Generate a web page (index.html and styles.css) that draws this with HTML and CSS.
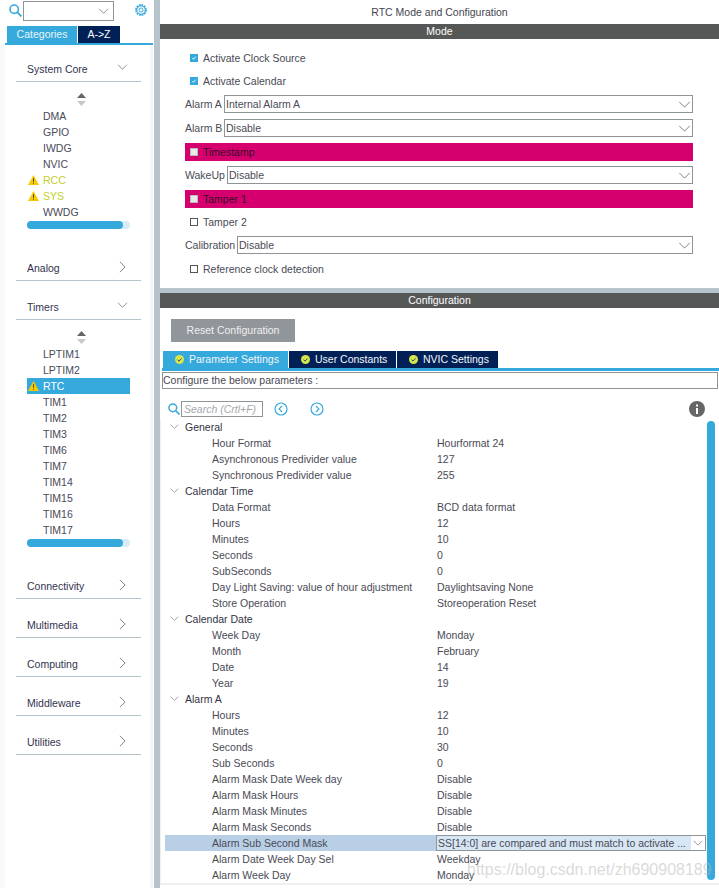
FILE: index.html
```html
<!DOCTYPE html>
<html lang="en">
<head>
<meta charset="utf-8">
<title>RTC Mode and Configuration</title>
<link rel="stylesheet" href="styles.css">
</head>
<body>
<svg class="defs" width="0" height="0" aria-hidden="true">
  <symbol id="down" viewBox="0 0 14 8"><path d="M1 1l6 6 6-6" fill="none" stroke="#6e7072" stroke-width="1"/></symbol>
  <symbol id="right" viewBox="0 0 8 14"><path d="M1 1l6 6-6 6" fill="none" stroke="#6e7072" stroke-width="1"/></symbol>
  <symbol id="warn" viewBox="0 0 11 10"><path d="M5.5 0L11 10H0z" fill="#f7c900"/><path d="M5.5 3.2v3.6M5.5 7.8v1" stroke="#5a4a00" stroke-width="1"/></symbol>
  <symbol id="sort" viewBox="0 0 9 13"><path d="M4.5 0L9 5H0z" fill="#62666a"/><path d="M4.5 13L9 8H0z" fill="#c6c9cc"/></symbol>
  <symbol id="search" viewBox="0 0 13 13"><circle cx="5.2" cy="5.2" r="4.2" fill="none" stroke="#36a9dc" stroke-width="1.6"/><path d="M8.4 8.4l4 4" stroke="#36a9dc" stroke-width="1.8"/></symbol>
  <symbol id="ok" viewBox="0 0 9 9"><circle cx="4.5" cy="4.5" r="4.5" fill="#d9e34a"/><path d="M2.5 4.6l1.500 1.500 2.600-2.700" fill="none" stroke="#1b5a7a" stroke-width="1"/></symbol>
</svg>
<div class="app">
  <aside class="side">
    <div class="top">
      <svg class="top-search"><use href="#search"/></svg>
      <div class="combo"><svg class="combo-arrow"><use href="#down"/></svg></div>
      <svg class="gear" viewBox="0 0 14 14">
        <circle cx="7" cy="7" r="5" fill="none" stroke="#36a9dc" stroke-width="1.800" stroke-dasharray="1.800 0.800"/>
        <circle cx="7" cy="7" r="4.200" fill="none" stroke="#36a9dc" stroke-width="1"/>
        <circle cx="7" cy="7" r="2" fill="none" stroke="#36a9dc" stroke-width="1"/>
      </svg>
    </div>
    <div class="side-tabs">
      <div class="side-tab on">Categories</div>
      <div class="side-tab">A-&gt;Z</div>
    </div>
    <div class="panel">
      <div class="cat"><span>System Core</span><svg class="cat-down"><use href="#down"/></svg></div>
      <div class="sort-row"><svg class="sort"><use href="#sort"/></svg></div>
      <ul class="list">
        <li>DMA</li><li>GPIO</li><li>IWDG</li><li>NVIC</li>
        <li class="warned"><svg class="warn"><use href="#warn"/></svg>RCC</li>
        <li class="warned"><svg class="warn"><use href="#warn"/></svg>SYS</li>
        <li>WWDG</li>
      </ul>
      <div class="hbar"><div class="hbar-fill"></div></div>

      <div class="cat gap"><span>Analog</span><svg class="cat-right"><use href="#right"/></svg></div>
      <div class="cat"><span>Timers</span><svg class="cat-down"><use href="#down"/></svg></div>
      <div class="sort-row"><svg class="sort"><use href="#sort"/></svg></div>
      <ul class="list">
        <li>LPTIM1</li><li>LPTIM2</li>
        <li class="sel"><svg class="warn"><use href="#warn"/></svg>RTC</li>
        <li>TIM1</li><li>TIM2</li><li>TIM3</li><li>TIM6</li><li>TIM7</li><li>TIM14</li><li>TIM15</li><li>TIM16</li><li>TIM17</li>
      </ul>
      <div class="hbar"><div class="hbar-fill"></div></div>

      <div class="cat gap"><span>Connectivity</span><svg class="cat-right"><use href="#right"/></svg></div>
      <div class="cat"><span>Multimedia</span><svg class="cat-right"><use href="#right"/></svg></div>
      <div class="cat"><span>Computing</span><svg class="cat-right"><use href="#right"/></svg></div>
      <div class="cat"><span>Middleware</span><svg class="cat-right"><use href="#right"/></svg></div>
      <div class="cat"><span>Utilities</span><svg class="cat-right"><use href="#right"/></svg></div>
    </div>
  </aside>

  <main class="main">
    <section class="mode">
      <div class="title">RTC Mode and Configuration</div>
      <div class="bar">Mode</div>
      <div class="form">
        <div class="row check"><span class="box on"><svg viewBox="0 0 9 9"><path d="M2.500 4.500l1.500 1.500 2.500-3" fill="none" stroke="#fff" stroke-width="1"/></svg></span>Activate Clock Source</div>
        <div class="row check"><span class="box on"><svg viewBox="0 0 9 9"><path d="M2.500 4.500l1.500 1.500 2.500-3" fill="none" stroke="#fff" stroke-width="1"/></svg></span>Activate Calendar</div>
        <div class="row"><label class="lab-alarm">Alarm A</label><div class="select">Internal Alarm A<svg class="sel-arrow"><use href="#down"/></svg></div></div>
        <div class="row plus"><label class="lab-alarm">Alarm B</label><div class="select">Disable<svg class="sel-arrow"><use href="#down"/></svg></div></div>
        <div class="row check pink plus"><span class="box"></span>Timestamp</div>
        <div class="row"><label class="lab-wake">WakeUp</label><div class="select">Disable<svg class="sel-arrow"><use href="#down"/></svg></div></div>
        <div class="row check pink plus"><span class="box"></span>Tamper 1</div>
        <div class="row check"><span class="box"></span>Tamper 2</div>
        <div class="row"><label class="lab-calib">Calibration</label><div class="select">Disable<svg class="sel-arrow"><use href="#down"/></svg></div></div>
        <div class="row check plus"><span class="box"></span>Reference clock detection</div>
      </div>
    </section>

    <section class="config">
      <div class="bar">Configuration</div>
      <div class="reset">Reset Configuration</div>
      <div class="tabs">
        <div class="tab on"><svg class="ok"><use href="#ok"/></svg>Parameter Settings</div>
        <div class="tab w2"><svg class="ok"><use href="#ok"/></svg>User Constants</div>
        <div class="tab w3"><svg class="ok"><use href="#ok"/></svg>NVIC Settings</div>
      </div>
      <div class="desc">Configure the below parameters :</div>
      <div class="tools">
        <svg class="tool-search"><use href="#search"/></svg>
        <div class="find">Search (Crtl+F)</div>
        <svg class="nav prev" viewBox="0 0 14 14"><circle cx="7" cy="7" r="6" fill="none" stroke="#36a9dc" stroke-width="1.200"/><path d="M8 4L5 7l3 3" fill="none" stroke="#36a9dc" stroke-width="1.100"/></svg>
        <svg class="nav next" viewBox="0 0 14 14"><circle cx="7" cy="7" r="6" fill="none" stroke="#36a9dc" stroke-width="1.200"/><path d="M6 4l3 3-3 3" fill="none" stroke="#36a9dc" stroke-width="1.100"/></svg>
        <svg class="info" viewBox="0 0 16 16"><circle cx="8" cy="8" r="8" fill="#666"/><rect x="7" y="7" width="2" height="6" fill="#fff"/><rect x="7" y="3.500" width="2" height="2" fill="#fff"/></svg>
      </div>
      <div class="tree">
        <div class="group"><svg class="tw"><use href="#down"/></svg>General</div>
        <div class="item"><span>Hour Format</span><span>Hourformat 24</span></div>
        <div class="item"><span>Asynchronous Predivider value</span><span>127</span></div>
        <div class="item"><span>Synchronous Predivider value</span><span>255</span></div>
        <div class="group"><svg class="tw"><use href="#down"/></svg>Calendar Time</div>
        <div class="item"><span>Data Format</span><span>BCD data format</span></div>
        <div class="item"><span>Hours</span><span>12</span></div>
        <div class="item"><span>Minutes</span><span>10</span></div>
        <div class="item"><span>Seconds</span><span>0</span></div>
        <div class="item"><span>SubSeconds</span><span>0</span></div>
        <div class="item"><span>Day Light Saving: value of hour adjustment</span><span>Daylightsaving None</span></div>
        <div class="item"><span>Store Operation</span><span>Storeoperation Reset</span></div>
        <div class="group"><svg class="tw"><use href="#down"/></svg>Calendar Date</div>
        <div class="item"><span>Week Day</span><span>Monday</span></div>
        <div class="item"><span>Month</span><span>February</span></div>
        <div class="item"><span>Date</span><span>14</span></div>
        <div class="item"><span>Year</span><span>19</span></div>
        <div class="group"><svg class="tw"><use href="#down"/></svg>Alarm A</div>
        <div class="item"><span>Hours</span><span>12</span></div>
        <div class="item"><span>Minutes</span><span>10</span></div>
        <div class="item"><span>Seconds</span><span>30</span></div>
        <div class="item"><span>Sub Seconds</span><span>0</span></div>
        <div class="item"><span>Alarm Mask Date Week day</span><span>Disable</span></div>
        <div class="item"><span>Alarm Mask Hours</span><span>Disable</span></div>
        <div class="item"><span>Alarm Mask Minutes</span><span>Disable</span></div>
        <div class="item"><span>Alarm Mask Seconds</span><span>Disable</span></div>
        <div class="item picked"><span>Alarm Sub Second Mask</span><div class="mask">SS[14:0] are compared and must match to activate ...<svg class="mask-arrow"><use href="#down"/></svg></div></div>
        <div class="item"><span>Alarm Date Week Day Sel</span><span>Weekday</span></div>
        <div class="item"><span>Alarm Week Day</span><span>Monday</span></div>
        <div class="vbar"></div>
      </div>
      <div class="mark">https://blog.csdn.net/zh690908189</div>
    </section>
  </main>
</div>
</body>
</html>
```
FILE: styles.css
```css
* { box-sizing: border-box; }
html, body { margin: 0; padding: 0; }
body {
  width: 719px;
  height: 888px;
  overflow: hidden;
  background: #fff;
  font: 10.5px/16px "Liberation Sans", Arial, sans-serif;
  color: #4a4a55;
}
.defs { position: absolute; }
ul { list-style: none; margin: 0; padding: 0; }

.app { display: grid; grid-template-columns: 154px 1fr; height: 888px; background: #b8c4cc; column-gap: 6px; }

/* sidebar */
.side { background: #fff; display: flex; flex-direction: column; height: 888px; overflow: hidden; }
.top { height: 26px; display: flex; align-items: flex-start; padding: 1px 0 0 9px; }
.top-search { width: 13px; height: 13px; margin: 3px 1px 0 0; }
.combo { width: 91px; height: 20px; border: 1px solid #8f9497; display: flex; align-items: center; justify-content: flex-end; padding-right: 4px; }
.combo-arrow { width: 11px; height: 6px; }
.gear { width: 14px; height: 14px; margin: 2px 0 0 20px; }
.side-tabs { display: flex; gap: 1px; height: 17px; padding-left: 7px; }
.side-tab { width: 42px; background: #012056; color: #fff; text-align: center; line-height: 17px; }
.side-tab.on { width: 70px; background: #36a9dc; color: #e8f4fa; }
.panel { flex: 1; margin: 0 1px 0 5px; border-top: 2px solid #36a9dc; background: #fff; box-shadow: inset -3px 0 0 #f4f5f6, -5px 0 0 #f8f9f9; }
.cat { height: 39px; margin: 0 12px 0 11px; border-bottom: 1px solid #b8c4cc; display: flex; justify-content: space-between; align-items: flex-end; padding: 0 0 4px 11px; color: #33334f; }
.cat.gap { margin-top: 13px; }
.cat-down { width: 11px; height: 6px; margin: 0 13px 7px 0; }
.cat-right { width: 7px; height: 12px; margin: 0 15px 3px 0; }
.panel > .cat:first-child { height: 37px; }
.sort-row { height: 26px; padding: 11px 0 0 72px; }
.sort { width: 9px; height: 13px; display: block; }
.list li { height: 16px; margin: 0 23px 0 22px; padding-left: 16px; line-height: 16px; position: relative; color: #4a4a5a; }
.list .warned { color: #c3cf2a; }
.list .sel { background: #36a9dc; color: #fff; }
.warn { position: absolute; left: 1px; top: 3px; width: 11px; height: 10px; }
.hbar { height: 8px; margin: 1px 23px 0 22px; border-radius: 4px; background: #d7ecf7; }
.hbar-fill { width: 96px; height: 8px; border-radius: 4px; background: #36a9dc; }

/* main */
.main { display: flex; flex-direction: column; gap: 5px; height: 888px; }
.mode { background: #fff; height: 288px; }
.title { height: 24px; line-height: 24px; text-align: center; color: #45454f; }
.bar { height: 15px; line-height: 15px; background: #565857; color: #fff; text-align: center; }
.form { display: flex; flex-direction: column; gap: 5px; padding: 10px 26px 0 25px; }
.row { height: 18px; display: flex; align-items: center; }
.row.plus { margin-top: 1px; }
.lab-alarm { width: 39px; flex: none; }
.lab-wake { width: 42px; flex: none; }
.lab-calib { width: 52px; flex: none; }
.check { padding-left: 5px; }
.pink { background: #d5006e; color: #3a0a2a; }
.box { width: 8px; height: 8px; margin-right: 5px; border: 1px solid #55565a; background: #fff; flex: none; display: block; }
.box svg { display: block; width: 8px; height: 8px; margin: -1px; }
.pink .box { background: #e9e9e9; border-color: #bbb; }
.box.on { background: #36a9dc; border-color: #36a9dc; }
.select { flex: 1; height: 18px; line-height: 16px; border: 1px solid #8f9497; padding-left: 1px; display: flex; justify-content: space-between; align-items: center; background: #fff; }
.sel-arrow { width: 13px; height: 7px; margin-right: 1px; }

.config { flex: 1; position: relative; background: #fff; overflow: hidden; }
.reset { width: 124px; height: 23px; margin: 11px 0 0 11px; background: #91969b; color: #f0f0f0; text-align: center; line-height: 23px; }
.tabs { display: flex; gap: 1px; height: 17px; margin: 9px 0 0 3px; }
.tab { width: 107px; background: #012056; color: #f2f6fa; line-height: 17px; display: flex; align-items: center; padding-left: 12px; }
.tab.on { width: 125px; background: #36a9dc; }
.tab.w3 { width: 101px; }
.ok { width: 9px; height: 9px; margin-right: 5px; }
.desc { height: 17px; margin: 4px 1px 0 2px; border: 1px solid #8f9497; line-height: 15px; position: relative; }
.desc::before { content: ""; position: absolute; left: -1px; right: -2px; top: -5px; height: 3px; background: #36a9dc; }
.tools { height: 16px; margin-top: 12px; display: flex; align-items: center; padding-left: 8px; }
.tool-search { width: 12px; height: 12px; }
.find { width: 82px; height: 16px; margin-left: 1px; border: 1px solid #8f9497; font-style: italic; color: #a4a8ac; line-height: 14px; padding-left: 2px; }
.nav { width: 14px; height: 14px; }
.prev { margin-left: 11px; }
.next { margin-left: 22px; }
.info { width: 16px; height: 16px; margin-left: 365px; }
.tree { position: relative; margin: 2px 0 0; height: 466px; border-bottom: 2px solid #f0f0f0; border-left: 1px solid #f0f0f0; padding-left: 4px; }
.group { height: 16px; padding-left: 20px; position: relative; color: #33333f; }
.tw { position: absolute; left: 5px; top: 5px; width: 9px; height: 5px; }
.item { height: 16px; display: grid; grid-template-columns: 225px 1fr; padding-left: 47px; width: 541px; }
.picked { background: #b8cfe6; }
.mask { height: 16px; line-height: 14px; background: #d6e6f4; border: 1px solid #8f9497; padding-left: 1px; position: relative; white-space: nowrap; margin-left: -1px; }
.mask-arrow { position: absolute; right: 0; top: 0; width: 14px; height: 14px; padding: 4px 2px; background: #fff; }
.vbar { position: absolute; left: 546px; top: 2px; bottom: 3px; width: 8px; border-radius: 4px; background: #36a9dc; }
.mark { position: absolute; left: 307px; bottom: 8px; font-size: 16px; line-height: 20px; color: rgba(180, 180, 180, 0.5); white-space: nowrap; }
```
